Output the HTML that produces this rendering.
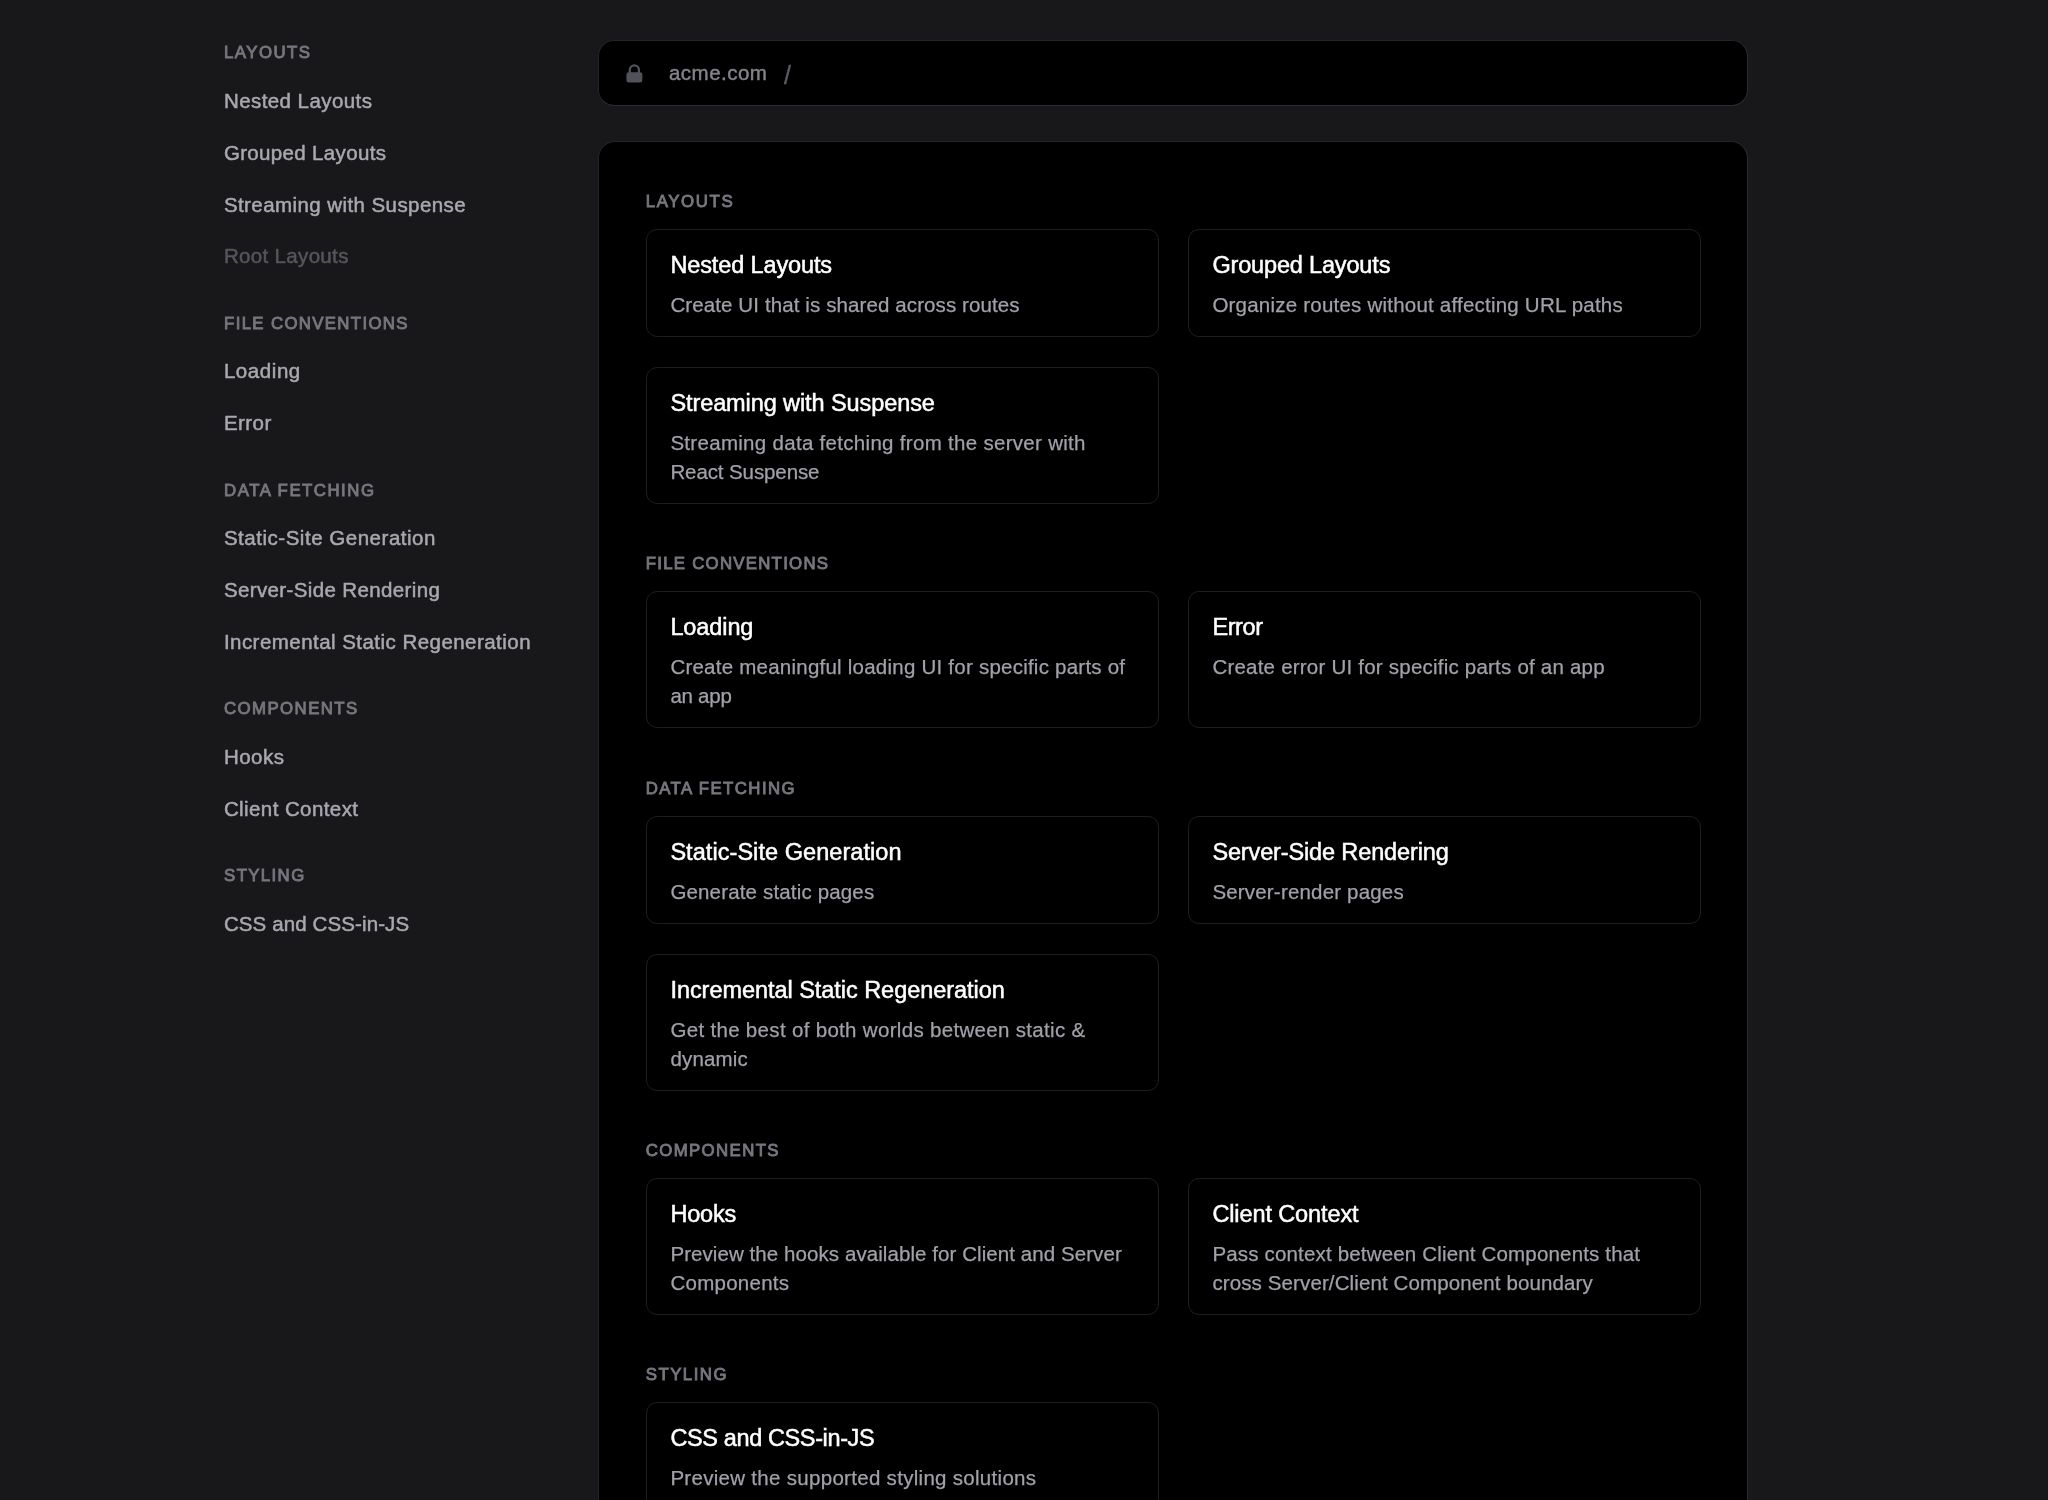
<!DOCTYPE html>
<html lang="en">
<head>
<meta charset="utf-8">
<title>Next.js App Directory Playground</title>
<style>
html,body{margin:0;padding:0}
html{overflow:hidden}
body{width:2048px;height:1500px;overflow:hidden;background:var(--bg);color:#fff;
  font-family:"Liberation Sans",sans-serif;position:relative;
  --bg:#18181b;--line:#2c2c2f;--line2:#242427;--cardline:#1e1e21;--dim:#76767e;--nav:#a8a8b0;--off:#55555d;--desc:#a1a1aa}
*{box-sizing:border-box}
h3,h4,p,ul,li{margin:0;padding:0;list-style:none;font-weight:400}
a{color:inherit;text-decoration:none;display:block}
/* own transparent layers -> grayscale text antialiasing (matches the macOS reference) */
nav,.bar>*,section{will-change:transform}

/* ---------- sidebar ---------- */
nav{position:absolute;left:0;top:0;width:590px;height:1000px}
nav .group{position:absolute;left:223.9px;width:340px}
.label{font-size:16.8px;line-height:22px;height:22px;-webkit-text-stroke:0.9px;color:var(--dim);white-space:nowrap;text-transform:uppercase}
nav .label{margin-left:0.2px}
nav li{height:51.75px}
nav li a{height:51.75px;line-height:52px;font-size:20.5px;color:var(--nav);white-space:nowrap;-webkit-text-stroke:0.5px}
nav li a.off{color:var(--off)}

/* ---------- main column ---------- */
main{position:absolute;left:598px;top:40px;width:1150px;height:1460px;overflow:hidden}
.bar{height:66px;border:1px solid var(--line);border-top-color:var(--line2);border-left-color:var(--line2);border-radius:16px;background:#000;position:relative}
.bar svg{position:absolute;left:23.6px;top:20.7px;width:22.76px;height:22.76px;fill:#52525b}
.bar span{position:absolute;top:0;line-height:64px;height:64px;white-space:nowrap}
.bar .host{left:69.6px;font-size:20.5px;color:#83838c;-webkit-text-stroke:0.45px}
.bar .slash{left:184.9px;top:2px;font-size:25px;color:#5d5d66;-webkit-text-stroke:0.3px}
.panel{margin-top:35px;border:1px solid var(--line);border-top-color:var(--line2);border-left-color:var(--line2);border-radius:17px;background:#000;height:1400px;position:relative}
section{position:absolute;left:47px;width:1055px}
section .label{margin:0 0 16px -0.3px}
.grid{display:grid;grid-template-columns:513px 513px;column-gap:29px;row-gap:29.8px}
.card{border:1px solid var(--cardline);border-radius:11px;padding:18px 16px 0 23.4px;height:108.2px;overflow:hidden}
.card.tall{height:137.2px}
.card h4{font-size:23.5px;line-height:34px;color:#fff;white-space:nowrap;-webkit-text-stroke:0.5px}
.card p{margin-top:8px;font-size:20.5px;line-height:29px;color:var(--desc);-webkit-text-stroke:0.25px}
.card p span{display:block;white-space:nowrap}
</style>
</head>
<body>
<nav>
  <div class="group" style="top:42px">
    <h3 class="label" style="letter-spacing:1.45px">LAYOUTS</h3>
    <ul style="margin-top:11px">
      <li><a style="letter-spacing:0.431px">Nested Layouts</a></li>
      <li><a style="letter-spacing:0.343px">Grouped Layouts</a></li>
      <li><a style="letter-spacing:0.423px">Streaming with Suspense</a></li>
      <li><a class="off" style="letter-spacing:0.336px">Root Layouts</a></li>
    </ul>
  </div>
  <div class="group" style="top:313px">
    <h3 class="label" style="letter-spacing:1.347px">FILE CONVENTIONS</h3>
    <ul style="margin-top:10px">
      <li><a style="letter-spacing:0.567px">Loading</a></li>
      <li><a style="letter-spacing:0.45px">Error</a></li>
    </ul>
  </div>
  <div class="group" style="top:480px">
    <h3 class="label" style="letter-spacing:1.508px">DATA FETCHING</h3>
    <ul style="margin-top:10px">
      <li><a style="letter-spacing:0.524px">Static-Site Generation</a></li>
      <li><a style="letter-spacing:0.37px">Server-Side Rendering</a></li>
      <li><a style="letter-spacing:0.46px">Incremental Static Regeneration</a></li>
    </ul>
  </div>
  <div class="group" style="top:698px">
    <h3 class="label" style="letter-spacing:1.422px">COMPONENTS</h3>
    <ul style="margin-top:11px">
      <li><a style="letter-spacing:0.475px">Hooks</a></li>
      <li><a style="letter-spacing:0.415px">Client Context</a></li>
    </ul>
  </div>
  <div class="group" style="top:865px">
    <h3 class="label" style="letter-spacing:1.383px">STYLING</h3>
    <ul style="margin-top:11px">
      <li><a style="letter-spacing:0.113px">CSS and CSS-in-JS</a></li>
    </ul>
  </div>
</nav>

<main>
  <div class="bar">
    <svg viewBox="0 0 20 20" aria-hidden="true"><path fill-rule="evenodd" clip-rule="evenodd" d="M5 9V7a5 5 0 0110 0v2a2 2 0 012 2v5a2 2 0 01-2 2H5a2 2 0 01-2-2v-5a2 2 0 012-2zm8-2v2H7V7a3 3 0 016 0z"/></svg>
    <span class="host" style="letter-spacing:0.471px">acme.com</span>
    <span class="slash">/</span>
  </div>
  <div class="panel">
    <section style="top:49px">
      <h3 class="label" style="letter-spacing:1.633px">LAYOUTS</h3>
      <div class="grid">
        <a class="card">
          <h4 style="letter-spacing:-0.123px">Nested Layouts</h4>
          <p><span style="letter-spacing:0.108px">Create UI that is shared across routes</span></p>
        </a>
        <a class="card">
          <h4 style="letter-spacing:-0.164px">Grouped Layouts</h4>
          <p><span style="letter-spacing:0.219px">Organize routes without affecting URL paths</span></p>
        </a>
        <a class="card tall">
          <h4 style="letter-spacing:-0.091px">Streaming with Suspense</h4>
          <p><span style="letter-spacing:0.3px">Streaming data fetching from the server with</span><span style="letter-spacing:-0.1px">React Suspense</span></p>
        </a>
      </div>
    </section>
    <section style="top:411px">
      <h3 class="label" style="letter-spacing:1.273px">FILE CONVENTIONS</h3>
      <div class="grid">
        <a class="card tall">
          <h4 style="letter-spacing:-0.1px">Loading</h4>
          <p><span style="letter-spacing:0.233px">Create meaningful loading UI for specific parts of</span><span style="letter-spacing:-0.26px">an app</span></p>
        </a>
        <a class="card tall">
          <h4 style="letter-spacing:-0.4px">Error</h4>
          <p><span style="letter-spacing:0.219px">Create error UI for specific parts of an app</span></p>
        </a>
      </div>
    </section>
    <section style="top:636px">
      <h3 class="label" style="letter-spacing:1.425px">DATA FETCHING</h3>
      <div class="grid">
        <a class="card">
          <h4 style="letter-spacing:0.057px">Static-Site Generation</h4>
          <p><span style="letter-spacing:0.16px">Generate static pages</span></p>
        </a>
        <a class="card">
          <h4 style="letter-spacing:-0.135px">Server-Side Rendering</h4>
          <p><span style="letter-spacing:0.183px">Server-render pages</span></p>
        </a>
        <a class="card tall">
          <h4 style="letter-spacing:-0.043px">Incremental Static Regeneration</h4>
          <p><span style="letter-spacing:0.319px">Get the best of both worlds between static &amp;</span><span style="letter-spacing:0.167px">dynamic</span></p>
        </a>
      </div>
    </section>
    <section style="top:998px">
      <h3 class="label" style="letter-spacing:1.389px">COMPONENTS</h3>
      <div class="grid">
        <a class="card tall">
          <h4 style="letter-spacing:-0.2px">Hooks</h4>
          <p><span style="letter-spacing:0.073px">Preview the hooks available for Client and Server</span><span style="letter-spacing:0.267px">Components</span></p>
        </a>
        <a class="card tall">
          <h4 style="letter-spacing:-0.108px">Client Context</h4>
          <p><span style="letter-spacing:0.171px">Pass context between Client Components that</span><span style="letter-spacing:0.116px">cross Server/Client Component boundary</span></p>
        </a>
      </div>
    </section>
    <section style="top:1222px">
      <h3 class="label" style="letter-spacing:1.5px">STYLING</h3>
      <div class="grid">
        <a class="card">
          <h4 style="letter-spacing:-0.375px">CSS and CSS-in-JS</h4>
          <p><span style="letter-spacing:0.297px">Preview the supported styling solutions</span></p>
        </a>
      </div>
    </section>
  </div>
</main>
</body>
</html>
